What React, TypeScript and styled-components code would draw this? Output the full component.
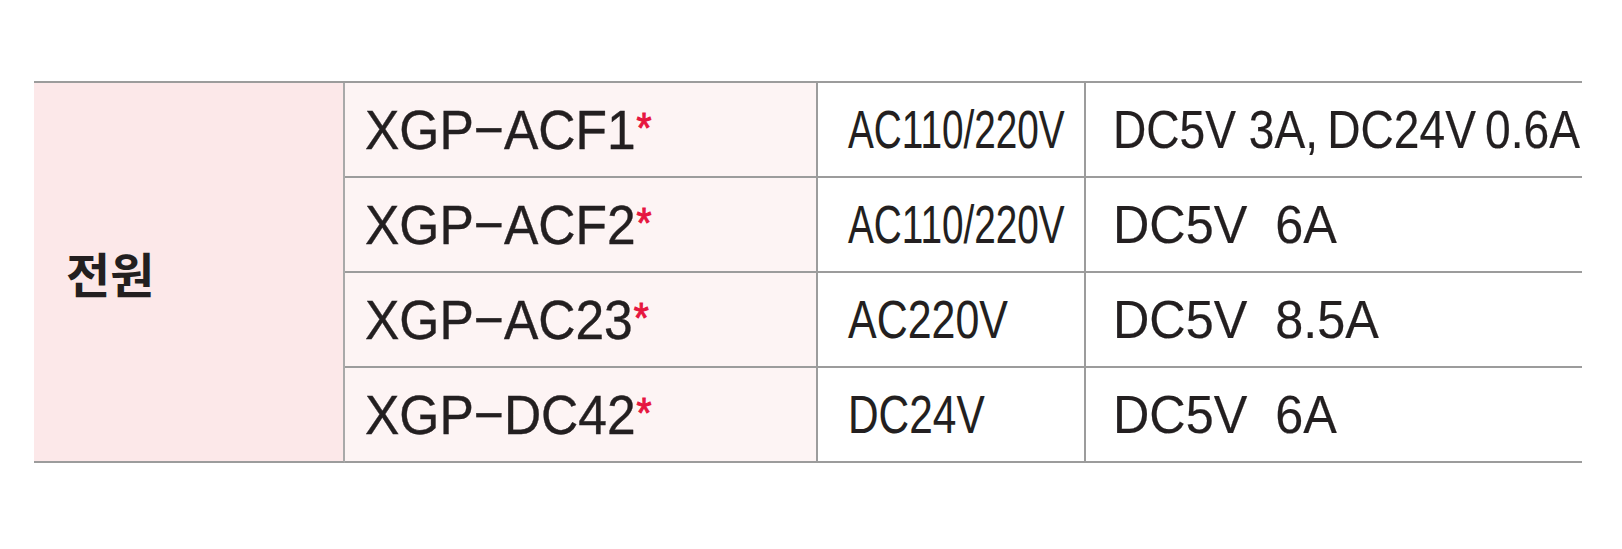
import React from "react";
import styled, { createGlobalStyle } from "styled-components";

const Global = createGlobalStyle`
  html, body { margin: 0; padding: 0; background: #ffffff; }
  body { font-family: "Liberation Sans", Arial, sans-serif; color: #231f20; }
`;

const Page = styled.div`
  padding: 81px 0 0 34px;
  width: 1622px;
  height: 549px;
  box-sizing: border-box;
`;

const Table = styled.div`
  display: grid;
  grid-template-columns: 311px 473px 268px 496px;
  grid-template-rows: repeat(4, 95px);
  border-top: 2px solid #9c9c9c;
  width: 1548px;
`;

const GroupCell = styled.div`
  grid-row: 1 / span 4;
  grid-column: 1;
  background: #fce8e9;
  border-right: 2px solid #a9a9a9;
  border-bottom: 2px solid #9c9c9c;
  display: flex;
  align-items: center;
  padding-left: 32px;
  font-family: "Noto Sans CJK KR", "Noto Sans", sans-serif;
  font-weight: 700;
  font-size: 48px;
  color: #231f20;
`;

const Cell = styled.div<{ $bg?: string; $pad: number; $right?: boolean }>`
  display: flex;
  align-items: center;
  box-sizing: border-box;
  background: ${(p) => p.$bg ?? "#ffffff"};
  border-bottom: 2px solid #9c9c9c;
  border-right: ${(p) => (p.$right ? "2px solid #9c9c9c" : "none")};
  padding-left: ${(p) => p.$pad}px;
  white-space: pre;
`;

const Squeeze = styled.span<{ $size: number; $sx: number; $stroke?: number }>`
  display: inline-block;
  font-size: ${(p) => p.$size}px;
  line-height: 1;
  transform: scaleX(${(p) => p.$sx});
  transform-origin: left center;
  white-space: pre;
  -webkit-text-stroke: ${(p) => p.$stroke ?? 0}px #231f20;
`;

const Star = styled.span`
  color: #e6163f;
  -webkit-text-stroke: 1px #e6163f;
  font-size: 42px;
  vertical-align: 7px;
  margin-left: 1px;
`;

type Row = { model: string; input: string; inSx: number; output: string; outSx: number };

const rows: Row[] = [
  { model: "XGP\u2212ACF1", input: "AC110/220V", inSx: 0.73, output: "DC5V 3A,\u2009DC24V\u20090.6A", outSx: 0.87 },
  { model: "XGP\u2212ACF2", input: "AC110/220V", inSx: 0.73, output: "DC5V  6A", outSx: 0.95 },
  { model: "XGP\u2212AC23", input: "AC220V", inSx: 0.81, output: "DC5V  8.5A", outSx: 0.95 },
  { model: "XGP\u2212DC42", input: "DC24V", inSx: 0.8, output: "DC5V  6A", outSx: 0.95 },
];

export default function App() {
  return (
    <>
      <Global />
      <Page>
        <Table>
          <GroupCell>전원</GroupCell>
          {rows.map((r) => (
            <React.Fragment key={r.model}>
              <Cell $bg="#fdf4f4" $pad={20} $right>
                <Squeeze $size={56} $sx={0.92} $stroke={0.4}>
                  {r.model}
                  <Star>*</Star>
                </Squeeze>
              </Cell>
              <Cell $pad={30} $right>
                <Squeeze $size={53} $sx={r.inSx} $stroke={0.1}>{r.input}</Squeeze>
              </Cell>
              <Cell $pad={27}>
                <Squeeze $size={53} $sx={r.outSx} $stroke={0.2}>{r.output}</Squeeze>
              </Cell>
            </React.Fragment>
          ))}
        </Table>
      </Page>
    </>
  );
}
